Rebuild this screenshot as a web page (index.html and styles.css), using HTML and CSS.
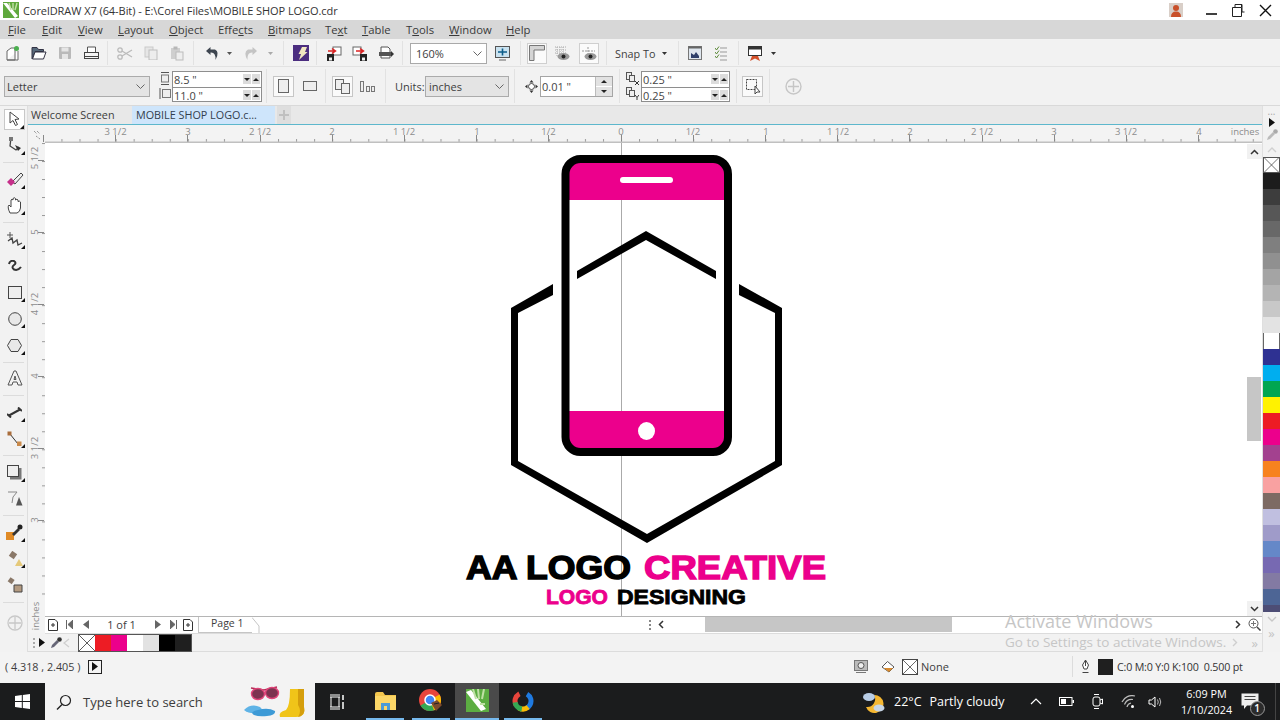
FILE: index.html
```html
<!DOCTYPE html>
<html lang="en">
<head>
<meta charset="utf-8">
<title>CorelDRAW X7</title>
<link rel="stylesheet" href="styles.css">
</head>
<body>
<div class="app">
  <header class="titlebar">
    <svg class="app-logo" width="16" height="16" viewBox="0 0 16 16"><rect width="16" height="16" fill="#5fa83c"/><path d="M0 1 L4 1 L15 14 L12 16 Z" fill="#fff"/><path d="M6 1 L8 8 M10 1 L10 8 M14 1 L12 8" stroke="#c4e0a8" stroke-width="1.4"/></svg>
    <span class="title-text">CorelDRAW X7 (64-Bit) - E:\Corel Files\MOBILE SHOP LOGO.cdr</span>
    <svg class="win-user" width="14" height="14" viewBox="0 0 14 14"><rect width="14" height="14" fill="#d9cfc8"/><circle cx="7" cy="5" r="3" fill="#c9502a"/><path d="M2 14 Q2 8.500 7 8.500 Q12 8.500 12 14Z" fill="#c9502a"/></svg>
    <svg class="win-min" width="11" height="11" viewBox="0 0 11 11"><path d="M0 9 H11" stroke="#111" stroke-width="1.6"/></svg>
    <svg class="win-max" width="13" height="13" viewBox="0 0 13 13"><path d="M3 3 V0.500 H10 V8 H12.500 M0.500 3.500 H9.500 V12.500 H0.500Z M3 0.500 H9.500 V3" fill="none" stroke="#222" stroke-width="1"/></svg>
    <svg class="win-close" width="13" height="13" viewBox="0 0 13 13"><path d="M1 1 L12 12 M12 1 L1 12" stroke="#111" stroke-width="1.4"/></svg>
  </header>

  <nav class="menubar">
    <span class="mi m1"><u>F</u>ile</span>
    <span class="mi m2"><u>E</u>dit</span>
    <span class="mi m3"><u>V</u>iew</span>
    <span class="mi m4"><u>L</u>ayout</span>
    <span class="mi m5"><u>O</u>bject</span>
    <span class="mi m6">Effe<u>c</u>ts</span>
    <span class="mi m7"><u>B</u>itmaps</span>
    <span class="mi m8">Te<u>x</u>t</span>
    <span class="mi m9"><u>T</u>able</span>
    <span class="mi m10">T<u>o</u>ols</span>
    <span class="mi m11"><u>W</u>indow</span>
    <span class="mi m12"><u>H</u>elp</span>
  </nav>

  <div class="toolbar">
    <span class="slot s26"><svg width="16" height="16" viewBox="0 0 16 16"><path d="M2 15 V6 L6 3 H10 V15Z M2 15 H13 V6" fill="#fff" stroke="#666"/><circle cx="11.500" cy="3.500" r="2.500" fill="#4caf50"/></svg></span>
    <span class="slot s26"><svg width="16" height="14" viewBox="0 0 16 14"><path d="M1 13 V1.500 H6 L7.500 3.500 H12.500 V5.500 H4 L1.500 13" fill="#56687a" stroke="#334"/><path d="M1.500 13 L4 6 H15 L12.500 13Z" fill="#fff" stroke="#334"/></svg></span>
    <span class="slot s26"><svg width="14" height="14" viewBox="0 0 14 14"><rect x="1" y="1" width="12" height="12" rx="1" fill="#b9b9b9"/><rect x="3.500" y="1.500" width="7" height="4" fill="#e5e5e5"/><rect x="4" y="8" width="6" height="5" fill="#e5e5e5"/></svg></span>
    <span class="slot s26"><svg width="15" height="14" viewBox="0 0 15 14"><path d="M3.500 6 V1 H11.500 V6" fill="#fff" stroke="#555"/><rect x="0.500" y="6.500" width="14" height="6" fill="#f5f5f5" stroke="#444"/><path d="M0.500 10.500 H14.500" stroke="#444"/></svg></span>
    <i class="sep"></i>
    <span class="slot s26"><svg width="16" height="13" viewBox="0 0 16 13"><circle cx="3" cy="3" r="2.200" fill="none" stroke="#bbb" stroke-width="1.300"/><circle cx="3" cy="10" r="2.200" fill="none" stroke="#bbb" stroke-width="1.300"/><path d="M5 4 L15 10 M5 9 L15 3" stroke="#bbb" stroke-width="1.300"/></svg></span>
    <span class="slot s26"><svg width="14" height="14" viewBox="0 0 14 14"><rect x="1" y="1" width="8" height="10" fill="#e6e6e6" stroke="#c9c9c9"/><rect x="5" y="4" width="8" height="10" fill="#ededed" stroke="#bdbdbd"/></svg></span>
    <span class="slot s26"><svg width="14" height="15" viewBox="0 0 14 15"><rect x="1" y="2" width="9" height="11" fill="#cfcfcf"/><rect x="3.500" y="0.500" width="4" height="3" fill="#b7b7b7"/><rect x="6" y="6" width="7" height="8" fill="#eee" stroke="#bbb"/></svg></span>
    <i class="sep"></i>
    <span class="slot s28"><svg width="15" height="15" viewBox="0 0 15 15"><path d="M5.500 1 L1 5 L5.500 9 V6.500 Q11 6 10.500 14 Q15 6 10 3.500 H5.500Z" fill="#3e4650"/></svg></span>
    <span class="slot s6"><svg width="5" height="3" viewBox="0 0 5 3"><path d="M0 0 H5 L2.500 3Z" fill="#555"/></svg></span>
    <span class="slot s36"><svg width="15" height="15" viewBox="0 0 15 15"><path d="M9.500 1 L14 5 L9.500 9 V6.500 Q4 6 4.500 14 Q0 6 5 3.500 H9.500Z" fill="#c4c4c4"/></svg></span>
    <span class="slot s4"><svg width="5" height="3" viewBox="0 0 5 3"><path d="M0 0 H5 L2.500 3Z" fill="#aaa"/></svg></span>
    <span class="slot s8"></span>
    <i class="sep"></i>
    <span class="slot s25"><svg width="16" height="16" viewBox="0 0 16 16"><rect width="16" height="16" fill="#4b2d7f"/><path d="M9 2 H14 L12 7 H14.500 L6 15 L8 9 H5.500Z" fill="#f0e6c0"/></svg></span>
    <i class="sep"></i>
    <span class="slot s26"><svg width="16" height="15" viewBox="0 0 16 15"><rect x="7" y="1" width="8" height="8" fill="#fff" stroke="#666"/><path d="M2 5 H9 M6 2.500 L9.500 5 L6 7.500" stroke="#d22" stroke-width="1.500" fill="none"/><rect x="1" y="8" width="7" height="7" fill="#222"/><rect x="3" y="11.500" width="3" height="3" fill="#eee"/></svg></span>
    <span class="slot s26"><svg width="16" height="15" viewBox="0 0 16 15"><rect x="1" y="1" width="8" height="8" fill="#fff" stroke="#666"/><path d="M4 5 H11 M8 2.500 L11.500 5 L8 7.500" stroke="#d22" stroke-width="1.500" fill="none"/><rect x="8" y="8" width="7" height="7" fill="#222"/><rect x="10" y="11.500" width="3" height="3" fill="#eee"/></svg></span>
    <span class="slot s26"><svg width="16" height="15" viewBox="0 0 16 15"><path d="M3 1 H10 L12 3 V12 H3Z" fill="#fff" stroke="#555"/><path d="M1 6 H13 V10 H1Z" fill="#555"/><path d="M13 5 L16 8 L13 11Z" fill="#333"/></svg></span>
    <i class="sep"></i>
    <span class="combo zoom-combo">160%<svg class="chev" width="9" height="5" viewBox="0 0 9 5"><path d="M0.500 0.500 L4.500 4.500 L8.500 0.500" fill="none" stroke="#666"/></svg></span>
    <span class="slot s30"><svg width="15" height="15" viewBox="0 0 15 15"><rect x="0.500" y="0.500" width="14" height="11" fill="#c9e2f0" stroke="#555"/><path d="M3 6 H12 M7.500 2.500 V9.500" stroke="#0d5d8a" stroke-width="1.600"/><path d="M4 14 H11" stroke="#666"/></svg></span>
    <i class="sep"></i>
    <span class="slot s24"><span class="btn-box"><svg width="16" height="16" viewBox="0 0 16 16"><path d="M0.500 0.500 H15.500 V5 H5 V15.500 H0.500Z" fill="#d5d5d5" stroke="#777"/></svg></span></span>
    <span class="slot s26"><svg width="16" height="15" viewBox="0 0 16 15"><path d="M1 1 H13 M1 4 H13 M1 7 H13 M3 1 V10 M6 1 V10 M9 1 V8" stroke="#aaa" stroke-dasharray="1 1"/><ellipse cx="9.500" cy="10.500" rx="6" ry="3.500" fill="#999"/><circle cx="9.500" cy="10.500" r="2" fill="#222"/></svg></span>
    <span class="slot s28"><span class="btn-box"><svg width="16" height="15" viewBox="0 0 16 15"><path d="M1 5 H14 M7 1 V9" stroke="#999" stroke-dasharray="2 1"/><ellipse cx="9.500" cy="10.500" rx="6" ry="3.500" fill="#999"/><circle cx="9.500" cy="10.500" r="2" fill="#222"/></svg></span></span>
    <i class="sep"></i>
    <span class="tb-label">Snap To</span>
    <span class="slot s21"><svg width="5" height="3" viewBox="0 0 5 3"><path d="M0 0 H5 L2.500 3Z" fill="#333"/></svg></span>
    <i class="sep"></i>
    <span class="slot s24"><svg width="14" height="14" viewBox="0 0 14 14"><rect x="0.500" y="0.500" width="13" height="13" fill="#dfe6ee" stroke="#777"/><rect x="0.500" y="0.500" width="13" height="2" fill="#666"/><path d="M3 12 V7 L6 9 L8 6 L11 10 V12Z" fill="#2f3f6a"/></svg></span>
    <span class="slot s28"><svg width="12" height="15" viewBox="0 0 12 15"><path d="M5 2 H12 M5 6 H12 M5 10 H12 M5 14 H12" stroke="#999"/><path d="M0 2 L1.500 4 L4 0.500 M0 6 L1.500 8 L4 4.500 M0 10 L1.500 12 L4 8.500" stroke="#5d8a3a" fill="none"/></svg></span>
    <i class="sep"></i>
    <span class="slot s24"><svg width="14" height="15" viewBox="0 0 14 15"><rect x="0.500" y="0.500" width="13" height="9" fill="#fff" stroke="#333"/><rect x="0.500" y="0.500" width="13" height="3" fill="#333"/><path d="M4 10 H10 L12 15 L7 12.500 L2 15Z" fill="#d4502a"/></svg></span>
    <span class="slot s12"><svg width="5" height="3" viewBox="0 0 5 3"><path d="M0 0 H5 L2.500 3Z" fill="#333"/></svg></span>
  </div>

  <div class="propbar">
    <span class="combo paper-combo">Letter<svg class="chev" width="9" height="5" viewBox="0 0 9 5"><path d="M0.500 0.500 L4.500 4.500 L8.500 0.500" fill="none" stroke="#666"/></svg></span>
    <span class="dim-icons">
      <svg width="12" height="13" viewBox="0 0 12 13"><path d="M2 0.500 H10 M2 12.500 H10" stroke="#555"/><rect x="2.500" y="3" width="7" height="7" fill="#eee" stroke="#777"/></svg>
      <svg width="12" height="13" viewBox="0 0 12 13"><path d="M1 1 V12" stroke="#555"/><rect x="3.500" y="2.500" width="8" height="8" fill="#eee" stroke="#777"/></svg>
    </span>
    <span class="spin-stack dims">
      <span class="spin-row"><span class="val">8.5 "</span><b class="sp dn"></b><b class="sp up"></b></span>
      <span class="spin-row"><span class="val">11.0 "</span><b class="sp dn"></b><b class="sp up"></b></span>
    </span>
    <i class="sep pb-s1"></i>
    <span class="pb-box pb-portrait"><svg width="11" height="14" viewBox="0 0 11 14"><rect x="0.500" y="0.500" width="10" height="13" fill="#eee" stroke="#666"/></svg></span>
    <span class="pb-ic pb-landscape"><svg width="14" height="10" viewBox="0 0 14 10"><rect x="0.500" y="0.500" width="13" height="9" fill="#eee" stroke="#666"/></svg></span>
    <i class="sep pb-s2"></i>
    <span class="pb-box pb-pages"><svg width="15" height="15" viewBox="0 0 15 15"><rect x="0.500" y="0.500" width="8" height="10" fill="#eee" stroke="#666"/><rect x="6.500" y="4.500" width="8" height="10" fill="#eee" stroke="#666"/></svg></span>
    <span class="pb-ic pb-pagecur"><svg width="15" height="11" viewBox="0 0 15 11"><rect x="0.500" y="0.500" width="3" height="10" fill="#eee" stroke="#777"/><rect x="6.500" y="5.500" width="3" height="5" fill="#eee" stroke="#777"/><rect x="11.500" y="5.500" width="3" height="5" fill="#eee" stroke="#777"/></svg></span>
    <i class="sep pb-s3"></i>
    <span class="units-label">Units:</span>
    <span class="combo units-combo">inches<svg class="chev" width="9" height="5" viewBox="0 0 9 5"><path d="M0.500 0.500 L4.500 4.500 L8.500 0.500" fill="none" stroke="#666"/></svg></span>
    <i class="sep pb-s4"></i>
    <span class="pb-ic pb-nudge"><svg width="13" height="13" viewBox="0 0 13 13"><circle cx="6.500" cy="6.500" r="3" fill="#fff" stroke="#444"/><path d="M6.500 0 L8.500 2.500 H4.500Z M6.500 13 L8.500 10.500 H4.500Z M0 6.500 L2.500 4.500 V8.500Z M13 6.500 L10.500 4.500 V8.500Z" fill="#333"/></svg></span>
    <span class="nudge-input"><span class="val">0.01 "</span><span class="nudge-spin"><b class="sp-big up"></b><b class="sp-big dn"></b></span></span>
    <i class="sep pb-s5"></i>
    <span class="dim-icons dup-icons">
      <svg width="13" height="13" viewBox="0 0 13 13"><rect x="0.500" y="0.500" width="5" height="7" fill="#eee" stroke="#555"/><rect x="3.500" y="3.500" width="5" height="6" fill="#eee" stroke="#555"/><path d="M9 9 L13 13 M13 9 L9 13" stroke="#333"/></svg>
      <svg width="13" height="13" viewBox="0 0 13 13"><rect x="0.500" y="0.500" width="5" height="7" fill="#eee" stroke="#555"/><rect x="3.500" y="3.500" width="5" height="6" fill="#eee" stroke="#555"/><path d="M9 8 L11 10.500 L13 8 M11 10.500 V13" stroke="#333" fill="none"/></svg>
    </span>
    <span class="spin-stack dups">
      <span class="spin-row"><span class="val">0.25 "</span><b class="sp dn"></b><b class="sp up"></b></span>
      <span class="spin-row"><span class="val">0.25 "</span><b class="sp dn"></b><b class="sp up"></b></span>
    </span>
    <i class="sep pb-s6"></i>
    <span class="pb-box pb-treat"><svg width="16" height="17" viewBox="0 0 16 17"><rect x="1.500" y="1.500" width="10" height="10" fill="none" stroke="#444" stroke-dasharray="2 1"/><path d="M10 8 V16 L12 14 L15 14Z" fill="#fff" stroke="#444"/></svg></span>
    <i class="sep pb-s7"></i>
    <span class="pb-ic pb-plus"><svg width="17" height="17" viewBox="0 0 17 17"><circle cx="8.500" cy="8.500" r="7.500" fill="none" stroke="#c6c6c6" stroke-width="1.400"/><path d="M8.500 3 V14 M3 8.500 H14" stroke="#c6c6c6" stroke-width="1.400"/></svg></span>
  </div>

  <div class="workspace">
    <aside class="toolbox">
      <span class="tool"><span class="tool-active"><svg width="14" height="16" viewBox="0 0 14 16"><path d="M2 1 L2 12 L5 9.500 L7.500 14.500 L9.500 13.500 L7 8.500 L11 8Z" fill="#fff" stroke="#444"/></svg><b class="corner corner-in"></b></span></span>
      <span class="tool"><svg width="16" height="17" viewBox="0 0 16 17"><path d="M4 1 L3 9 L9 13 L12 10" fill="none" stroke="#444" stroke-width="1.300"/><rect x="2" y="0" width="4" height="4" fill="#777"/><path d="M8 8 L11 14 L14 11Z" fill="#333"/></svg><b class="corner"></b></span>
      <i class="tool-sep"></i>
      <span class="tool"><svg width="18" height="16" viewBox="0 0 18 16"><path d="M6 11 L15 2 L17 4 L9 13Z" fill="#eee" stroke="#444"/><path d="M1 11 L5 7 L9 11 L5 15Z" fill="#c62f8a"/></svg><b class="corner"></b></span>
      <span class="tool"><svg width="15" height="17" viewBox="0 0 15 17"><path d="M3 16 Q0 10 2 8 L4 10 V3 Q5 1.500 6 3 V1.500 Q7.500 0 8.500 1.500 V3 Q10 1.500 11 3 V4.500 Q12.500 3.500 13.500 5 V11 Q13 15 10 16Z" fill="#fff" stroke="#444"/></svg><b class="corner"></b></span>
      <i class="tool-sep"></i>
      <span class="tool"><svg width="17" height="15" viewBox="0 0 17 15"><path d="M1 3 H7 M4 0 V6" stroke="#555"/><path d="M2 9 L6 6 L7 11 L11 8 L12 13 L16 11" fill="none" stroke="#444" stroke-width="1.300"/></svg><b class="corner"></b></span>
      <span class="tool"><svg width="14" height="11" viewBox="0 0 14 11"><path d="M1 4 Q2 0 6 1 Q9 3 6 5 Q3 7 6 9.500 Q10 11 13 7" fill="none" stroke="#333" stroke-width="2"/></svg></span>
      <span class="tool"><svg width="14" height="13" viewBox="0 0 14 13"><rect x="0.500" y="0.500" width="13" height="12" fill="#eee" stroke="#444"/></svg><b class="corner"></b></span>
      <span class="tool"><svg width="14" height="14" viewBox="0 0 14 14"><circle cx="7" cy="7" r="6.300" fill="#e8e8e8" stroke="#444"/></svg><b class="corner"></b></span>
      <span class="tool"><svg width="15" height="13" viewBox="0 0 15 13"><path d="M4 0.500 H11 L14.500 6.500 L11 12.500 H4 L0.500 6.500Z" fill="#e8e8e8" stroke="#444"/></svg><b class="corner"></b></span>
      <i class="tool-sep"></i>
      <span class="tool"><svg width="16" height="17" viewBox="0 0 16 17"><path d="M1 15 L7 1 H9 L15 15 H11 L10 12 H6 L5 15Z M7 9.500 H9 L8 6Z" fill="#f2f2f2" stroke="#555"/></svg></span>
      <i class="tool-sep"></i>
      <span class="tool"><svg width="15" height="11" viewBox="0 0 15 11"><path d="M2 8.500 L13 2.500" stroke="#333" stroke-width="2"/><path d="M0 7 L4 10.500 M11 0.500 L15 4" stroke="#333" stroke-width="2"/></svg><b class="corner"></b></span>
      <span class="tool"><svg width="15" height="16" viewBox="0 0 15 16"><path d="M3 3 L11 13" stroke="#333"/><rect x="0.500" y="0.500" width="4" height="4" fill="#a96d3b"/><rect x="10" y="10.500" width="4.500" height="4.500" fill="#c98a4b"/></svg><b class="corner"></b></span>
      <i class="tool-sep"></i>
      <span class="tool"><svg width="15" height="15" viewBox="0 0 15 15"><rect x="3" y="3" width="11.500" height="11.500" fill="#777"/><rect x="0.500" y="0.500" width="11" height="11" fill="#eee" stroke="#444"/></svg><b class="corner"></b></span>
      <span class="tool"><svg width="16" height="15" viewBox="0 0 16 15"><path d="M1 1 H10 L6 6 L5 12" fill="none" stroke="#888"/><path d="M9 14.500 L12 6 L15.500 14.500Z" fill="#555"/></svg></span>
      <i class="tool-sep"></i>
      <span class="tool"><svg width="17" height="17" viewBox="0 0 17 17"><rect x="0" y="8" width="8" height="8" fill="#e08a25"/><path d="M6 10 L12 4 L14 6 L8 12Z" fill="#333"/><circle cx="14" cy="3" r="2.500" fill="#222"/></svg><b class="corner"></b></span>
      <span class="tool"><svg width="16" height="16" viewBox="0 0 16 16"><rect x="3" y="1" width="6" height="6" fill="#8a7868" transform="rotate(35 6 4)"/><path d="M8 15 L12 8 L16 15Z" fill="#e5c97a"/></svg><b class="corner"></b></span>
      <span class="tool"><svg width="16" height="16" viewBox="0 0 16 16"><rect x="2" y="1" width="5" height="5" fill="#8a7868" transform="rotate(35 4 3)"/><path d="M7 8 H15 V15 H7Z" fill="#b39a80" stroke="#444"/></svg></span>
      <i class="tool-sep"></i>
      <span class="tool tool-plus"><svg width="16" height="16" viewBox="0 0 16 16"><circle cx="8" cy="8" r="7" fill="none" stroke="#c8c8c8" stroke-width="1.300"/><path d="M8 2 V14 M2 8 H14" stroke="#c8c8c8" stroke-width="1.300"/></svg></span>
    </aside>

    <div class="center">
      <div class="tabs">
        <span class="tab">Welcome Screen</span>
        <span class="tab tab-current">MOBILE SHOP LOGO.c...</span>
        <span class="tab-add"><svg width="10" height="10" viewBox="0 0 10 10"><path d="M5 0 V10 M0 5 H10" stroke="#c0c0c0" stroke-width="2"/></svg></span>
      </div>
      <svg class="hruler" width="1234" height="18" viewBox="28 125 1234 18">
        <defs><pattern id="hminor" x="621" y="0" width="18.050" height="143" patternUnits="userSpaceOnUse"><path d="M0.500 139 V143" stroke="#999"/></pattern></defs>
        <rect x="45" y="125" width="1217" height="18" fill="url(#hminor)"/>
        <path d="M43.500 135 V142 M115.500 135 V142 M187.500 135 V142 M260.500 135 V142 M332.500 135 V142 M404.500 135 V142 M476.500 135 V142 M548.500 135 V142 M621.500 135 V142 M693.500 135 V142 M765.500 135 V142 M837.500 135 V142 M909.500 135 V142 M982.500 135 V142 M1054.500 135 V142 M1126.500 135 V142 M1198.500 135 V142" stroke="#888"/>
        <path d="M34 131 L37 134 M37 131 L40 134 M36 136 L40 139" stroke="#777" stroke-dasharray="1 1"/>
        <rect x="45" y="141.500" width="1217" height="1.500" fill="#c0c0c0"/>
        <g class="rl">
          <text x="115.500" y="135">3 1/2</text><text x="188" y="135">3</text><text x="260" y="135">2 1/2</text><text x="332" y="135">2</text><text x="404" y="135">1 1/2</text><text x="477" y="135">1</text><text x="548.500" y="135">1/2</text><text x="621" y="135">0</text><text x="693" y="135">1/2</text><text x="766" y="135">1</text><text x="838" y="135">1 1/2</text><text x="910" y="135">2</text><text x="982" y="135">2 1/2</text><text x="1054" y="135">3</text><text x="1126" y="135">3 1/2</text><text x="1199" y="135">4</text><text x="1245" y="135">inches</text>
        </g>
      </svg>
      <div class="mid">
        <svg class="vruler" width="17" height="490" viewBox="28 143 17 490">
          <defs><pattern id="vminor" x="0" y="161" width="45" height="18.020" patternUnits="userSpaceOnUse"><path d="M42 0.500 H45" stroke="#999"/></pattern></defs>
          <rect x="28" y="143" width="17" height="462" fill="url(#vminor)"/>
          <path d="M38 160.500 H44 M38 232.500 H44 M38 304.500 H44 M38 376.500 H44 M38 448.500 H44 M38 520.500 H44" stroke="#888"/>
          <g class="rl">
            <text transform="translate(38 158) rotate(-90)">5 1/2</text>
            <text transform="translate(38 232) rotate(-90)">5</text>
            <text transform="translate(38 304) rotate(-90)">4 1/2</text>
            <text transform="translate(38 376) rotate(-90)">4</text>
            <text transform="translate(38 448) rotate(-90)">3 1/2</text>
            <text transform="translate(38 520) rotate(-90)">3</text>
            <text transform="translate(39 616) rotate(-90)">inches</text>
          </g>
        </svg>
        <div class="canvas-col">
          <div class="canvas-row">
            <svg class="canvas" width="1202" height="473" viewBox="45 143 1202 473">
              <rect x="45" y="143" width="1202" height="473" fill="#fff"/>
              <path d="M621.500 143 V616" stroke="#aaaaaa"/>
              <path d="M553 284 L511 308 V465 L647 543 L782 465 V308 L739 284 V295 L775 313 V461 L647 534 L518 461 V313 L553 295Z" fill="#000"/>
              <path d="M569 200 V172 Q569 162 579 162 H714 Q724 162 724 172 V200Z" fill="#ec008c"/>
              <path d="M569 411 H724 V439 Q724 449 714 449 H579 Q569 449 569 439Z" fill="#ec008c"/>
              <rect x="565.500" y="159" width="162.500" height="293" rx="15" fill="none" stroke="#000" stroke-width="8"/>
              <rect x="620" y="177" width="53" height="6" rx="3" fill="#fff"/>
              <ellipse cx="646.500" cy="431" rx="8.500" ry="9" fill="#fff"/>
              <path d="M577 271 L646 231 L716 271 V279 L646 240 L577 279Z" fill="#000"/>
              <text class="lg lg-big" x="466" y="579" textLength="165" lengthAdjust="spacingAndGlyphs">AA LOGO</text>
              <text class="lg lg-big lg-pink" x="644" y="579" textLength="182" lengthAdjust="spacingAndGlyphs">CREATIVE</text>
              <text class="lg lg-small lg-pink" x="546" y="604" textLength="62" lengthAdjust="spacingAndGlyphs">LOGO</text>
              <text class="lg lg-small" x="617" y="604" textLength="129" lengthAdjust="spacingAndGlyphs">DESIGNING</text>
            </svg>
            <div class="vscroll">
              <span class="sb-btn"><svg width="9" height="6" viewBox="0 0 9 6"><path d="M1 5 L4.500 1.500 L8 5" fill="none" stroke="#333" stroke-width="1.500"/></svg></span>
              <span class="vthumb"></span>
              <span class="sb-btn"><svg width="9" height="6" viewBox="0 0 9 6"><path d="M1 1 L4.500 4.500 L8 1" fill="none" stroke="#333" stroke-width="1.500"/></svg></span>
            </div>
          </div>
          <div class="navrow">
            <svg class="nav-ic nav-add1" width="10" height="12" viewBox="0 0 10 12"><path d="M0.500 0.500 H7 L9.500 3 V11.500 H0.500Z M3 6 H7 M5 4 V8" fill="#fff" stroke="#333"/></svg>
            <svg class="nav-ic nav-first" width="7" height="9" viewBox="0 0 7 9"><path d="M0.500 0 V9 M7 0 V9 L2 4.500Z" stroke="#666" fill="#666"/></svg>
            <svg class="nav-ic nav-prev" width="6" height="9" viewBox="0 0 6 9"><path d="M6 0 V9 L0 4.500Z" fill="#666"/></svg>
            <span class="page-of">1 of 1</span>
            <svg class="nav-ic nav-next" width="6" height="9" viewBox="0 0 6 9"><path d="M0 0 V9 L6 4.500Z" fill="#666"/></svg>
            <svg class="nav-ic nav-last" width="7" height="9" viewBox="0 0 7 9"><path d="M6.500 0 V9 M0 0 V9 L5 4.500Z" stroke="#666" fill="#666"/></svg>
            <svg class="nav-ic nav-add2" width="10" height="12" viewBox="0 0 10 12"><path d="M0.500 0.500 H7 L9.500 3 V11.500 H0.500Z M3 6 H7 M5 4 V8" fill="#fff" stroke="#333"/></svg>
            <span class="page-tab">Page 1</span>
            <svg class="page-fold" width="8" height="16" viewBox="0 0 8 16"><path d="M0 0.500 L7 9 V16" fill="none" stroke="#c5c5c5"/></svg>
            <span class="hdots"></span>
            <span class="hscroll">
              <svg class="h-left" width="6" height="9" viewBox="0 0 6 9"><path d="M5 1 L1.500 4.500 L5 8" fill="none" stroke="#333" stroke-width="1.500"/></svg>
              <span class="hthumb"></span>
              <svg class="h-right" width="6" height="9" viewBox="0 0 6 9"><path d="M1 1 L4.500 4.500 L1 8" fill="none" stroke="#333" stroke-width="1.500"/></svg>
              <svg class="h-zoom" width="13" height="13" viewBox="0 0 13 13"><circle cx="5.500" cy="5.500" r="4.500" fill="#fff" stroke="#555"/><path d="M9 9 L12.500 12.500" stroke="#444" stroke-width="1.500"/><path d="M3 5.500 H8 M5.500 3 V8" stroke="#777"/></svg>
            </span>
          </div>
        </div>
      </div>
      <div class="palrow">
        <span class="dots"></span>
        <svg class="pal-play" width="6" height="9" viewBox="0 0 6 9"><path d="M0 0 V9 L6 4.500Z" fill="#111"/></svg>
        <svg class="pal-drop" width="12" height="12" viewBox="0 0 12 12"><path d="M1 11 L2 8 L7 3 L9 5 L4 10Z" fill="#667"/><circle cx="9.500" cy="2.500" r="2.300" fill="#333"/></svg>
        <svg class="pal-back" width="7" height="10" viewBox="0 0 7 10"><path d="M6 1 L1 5 L6 9" fill="none" stroke="#d0d0d0" stroke-width="1.400"/></svg>
        <span class="swatches">
          <span class="sw sw-none"><svg width="16" height="16" viewBox="0 0 16 16"><path d="M0 0 L16 16 M16 0 L0 16" stroke="#333" stroke-width="0.800"/></svg></span>
          <span class="sw c-red"></span><span class="sw c-mag"></span><span class="sw c-wht"></span><span class="sw c-lgr"></span><span class="sw c-blk"></span><span class="sw c-nbk"></span>
        </span>
        <svg class="pal-next" width="6" height="9" viewBox="0 0 6 9"><path d="M1 1 L4.500 4.500 L1 8" fill="none" stroke="#cfcfcf" stroke-width="1.400"/></svg>
        <span class="pal-more">»</span>
      </div>
    </div>

    <aside class="dock">
      <span class="dock-dots">...</span>
      <svg class="dock-play" width="6" height="9" viewBox="0 0 6 9"><path d="M0 0 V9 L6 4.500Z" fill="#111"/></svg>
      <svg class="dock-drop" width="12" height="12" viewBox="0 0 12 12"><path d="M1 11 L2 8 L7 3 L9 5 L4 10Z" fill="#bbb"/><circle cx="9.500" cy="2.500" r="2.300" fill="#aaa"/></svg>
      <svg class="dock-up" width="10" height="6" viewBox="0 0 10 6"><path d="M1 5 L5 1 L9 5" fill="none" stroke="#d0d0d0" stroke-width="1.400"/></svg>
      <div class="strip">
        <span class="ps ps-none"><svg width="16" height="16" viewBox="0 0 16 16"><path d="M0 0 L16 16 M16 0 L0 16" stroke="#333" stroke-width="0.800"/></svg></span>
        <span class="ps p1"></span><span class="ps p2"></span><span class="ps p3"></span><span class="ps p4"></span><span class="ps p5"></span><span class="ps p6"></span><span class="ps p7"></span><span class="ps p8"></span><span class="ps p9"></span><span class="ps p10"></span><span class="ps p11"></span><span class="ps p12"></span><span class="ps p13"></span><span class="ps p14"></span><span class="ps p15"></span><span class="ps p16"></span><span class="ps p17"></span><span class="ps p18"></span><span class="ps p19"></span><span class="ps p20"></span><span class="ps p21"></span><span class="ps p22"></span><span class="ps p23"></span><span class="ps p24"></span><span class="ps p25"></span><span class="ps p26"></span><span class="ps p27"></span><span class="ps p28"></span>
      </div>
      <svg class="dock-down" width="10" height="6" viewBox="0 0 10 6"><path d="M1 1 L5 5 L9 1" fill="none" stroke="#c8c8c8" stroke-width="1.400"/></svg>
      <span class="dock-more">»</span>
    </aside>
  </div>

  <div class="status">
    <span class="coords">( 4.318 , 2.405 )</span>
    <span class="coord-btn"><svg width="6" height="9" viewBox="0 0 6 9"><path d="M0 0 V9 L6 4.500Z" fill="#111"/></svg></span>
    <svg class="st-doc" width="14" height="13" viewBox="0 0 14 13"><rect x="0.500" y="0.500" width="13" height="10" fill="#bbb" stroke="#777"/><circle cx="7" cy="5.500" r="3" fill="#eee" stroke="#555"/><path d="M2 12.500 H12" stroke="#777"/></svg>
    <svg class="st-fill" width="15" height="14" viewBox="0 0 15 14"><path d="M1 7 L6.500 1.500 L13 7 L8 12Z" fill="#fff" stroke="#555"/><path d="M2.500 8 H12 L8 12Z" fill="#d88a2e"/></svg>
    <span class="st-none"><svg width="16" height="16" viewBox="0 0 16 16"><rect x="0.500" y="0.500" width="15" height="15" fill="#fff" stroke="#444"/><path d="M0 0 L16 16 M16 0 L0 16" stroke="#444" stroke-width="0.800"/></svg></span>
    <span class="st-none-label">None</span>
    <i class="st-sep"></i>
    <svg class="st-pen" width="9" height="15" viewBox="0 0 9 15"><path d="M4.500 1 L7.500 6 L6 10 H3 L1.500 6Z" fill="#fff" stroke="#444"/><path d="M4.500 1 V7 M1.500 13.500 H7.500" stroke="#444"/></svg>
    <span class="st-black"></span>
    <span class="st-outline">C:0 M:0 Y:0 K:100&nbsp; 0.500 pt</span>
  </div>

  <footer class="taskbar">
    <svg class="start" width="15" height="15" viewBox="0 0 15 15"><path d="M0 2 L6.800 1 V7 H0Z M7.800 0.900 L15 0 V7 H7.800Z M0 8 H6.800 V14 L0 13Z M7.800 8 H15 V15 L7.800 14.100Z" fill="#fff"/></svg>
    <div class="search">
      <svg class="search-ic" width="16" height="16" viewBox="0 0 16 16"><circle cx="9.500" cy="6.500" r="5" fill="none" stroke="#222" stroke-width="1.200"/><path d="M6 10.500 L1 15.500" stroke="#222" stroke-width="1.400"/></svg>
      <span class="search-text">Type here to search</span>
      <svg class="search-art" width="62" height="36" viewBox="0 0 62 36">
        <path d="M7 4 L20 6 L33 3" stroke="#b52c55" stroke-width="1.500" fill="none"/>
        <ellipse cx="14" cy="10" rx="6.500" ry="5.500" fill="#7d3350" stroke="#e0457a" stroke-width="1.400"/>
        <ellipse cx="28" cy="9" rx="6.500" ry="5.500" fill="#7d3350" stroke="#e0457a" stroke-width="1.400"/>
        <path d="M0 26 Q7 19 16 23 Q21 27 13 29 Q5 30 0 26Z" fill="#5fb3e6"/>
        <path d="M10 31 Q5 28 14 26 Q24 23 31 27 Q32 31 23 32 Q15 33 10 31Z" fill="#3d9ad6"/>
        <path d="M46 5 H60 V23 Q62 33 52 33 H36 Q34 28 42 26 Q46 22 46 5Z" fill="#f0c419"/>
        <path d="M54 5 H60 V23 Q62 31 54 33 Q58 27 54 21Z" fill="#d59e0c"/>
      </svg>
    </div>
    <svg class="tb-task" width="16" height="16" viewBox="0 0 16 16"><path d="M1 3 H11 M1 13 H11 M2 3 V13 M10 3 V13 M1 1 H11 M1 15 H11" stroke="#fff" stroke-width="1"/><path d="M14 1 V6 M14 8 V15" stroke="#fff" stroke-width="1.500"/></svg>
    <span class="tb-app tb-explorer"><svg width="21" height="18" viewBox="0 0 21 18"><path d="M0 2 Q0 0 2 0 H8 L10 3 H21 V18 H0Z" fill="#f3c64e"/><rect y="4" width="21" height="14" fill="#fbd667"/><path d="M6 18 V11 H15 V18 H12 V14 H9 V18Z" fill="#4a9bd6"/></svg></span>
    <span class="tb-app tb-chrome"><svg width="24" height="24" viewBox="0 0 24 24"><circle cx="11" cy="11" r="11" fill="#e8453c"/><path d="M11 11 L1.500 16.500 A11 11 0 0 0 11 22 Q17 22 20.500 16.500Z" fill="#34a853"/><path d="M11 11 L20.500 5.500 A11 11 0 0 1 15 21.300Z" fill="#fbbc05"/><circle cx="11" cy="11" r="5" fill="#4285f4" stroke="#fff" stroke-width="1.500"/><path d="M12 14 L18 11 L23 16 L17 22Z" fill="#7c4a2d"/><path d="M15 15 L20 14" stroke="#222"/></svg></span>
    <span class="tb-app tb-corel"><svg width="23" height="23" viewBox="0 0 23 23"><rect width="23" height="23" fill="#5cad42"/><path d="M0 3 L5 1 L20 20 L15 22 Z" fill="#fff"/><path d="M7 0 L10 10 M12 0 L13 10 M18 0 L16 10" stroke="#bfe0a5" stroke-width="2"/><path d="M14 15 H19" stroke="#bfe0a5" stroke-width="2"/></svg></span>
    <span class="tb-app tb-record"><svg width="22" height="22" viewBox="0 0 22 22"><circle cx="11" cy="11" r="8" fill="none" stroke="#e8453c" stroke-width="5" stroke-dasharray="13 40" transform="rotate(150 11 11)"/><circle cx="11" cy="11" r="8" fill="none" stroke="#1f7ae0" stroke-width="5" stroke-dasharray="17 40" transform="rotate(-60 11 11)"/><circle cx="11" cy="11" r="8" fill="none" stroke="#fbbc05" stroke-width="5" stroke-dasharray="10 40" transform="rotate(50 11 11)"/><circle cx="11" cy="11" r="8" fill="none" stroke="#34a853" stroke-width="5" stroke-dasharray="9 40" transform="rotate(105 11 11)"/></svg></span>
    <svg class="weather" width="23" height="22" viewBox="0 0 23 22"><path d="M12 4 A9 9 0 1 1 4 16 A8 8 0 0 0 12 4Z" fill="#f5b731"/><ellipse cx="7" cy="6" rx="6" ry="4" fill="#b8cde6"/><ellipse cx="17" cy="17" rx="5.500" ry="3.500" fill="#c8d6e6"/></svg>
    <span class="temp">22°C</span>
    <span class="cond">Partly cloudy</span>
    <svg class="tray-chev" width="12" height="7" viewBox="0 0 12 7"><path d="M1 6 L6 1 L11 6" fill="none" stroke="#fff" stroke-width="1.200"/></svg>
    <svg class="tray-batt" width="15" height="9" viewBox="0 0 15 9"><rect x="0.500" y="0.500" width="12.500" height="8" fill="none" stroke="#fff"/><rect x="2" y="2" width="5" height="5" fill="#fff"/><rect x="13.500" y="3" width="1.500" height="3" fill="#fff"/></svg>
    <svg class="tray-meet" width="11" height="17" viewBox="0 0 11 17"><rect x="1" y="4" width="7" height="9" rx="2" fill="none" stroke="#fff"/><path d="M8 7 L10.500 6 V11 L8 10 M2 1.500 H7 M2 15.500 H7" stroke="#fff" fill="none"/></svg>
    <svg class="tray-wifi" width="15" height="14" viewBox="0 0 15 14"><path d="M1 7 A11 11 0 0 1 14 1 M3.500 9.500 A8 8 0 0 1 12 4.500 M6 12 A5 5 0 0 1 10 8" fill="none" stroke="#bbb" stroke-width="1.200"/><circle cx="11.500" cy="11.500" r="1.500" fill="#fff"/></svg>
    <svg class="tray-vol" width="16" height="14" viewBox="0 0 16 14"><path d="M1 5 H3.500 L7 2 V12 L3.500 9 H1Z" fill="none" stroke="#fff"/><path d="M9.500 4.500 Q11 7 9.500 9.500 M11.500 3 Q14 7 11.500 11" fill="none" stroke="#bbb"/></svg>
    <span class="clock"><span>6:09 PM</span><span>1/10/2024</span></span>
    <span class="notif"><svg width="20" height="17" viewBox="0 0 20 17"><path d="M0.500 0.500 H17.500 V12.500 H6 L3 16 V12.500 H0.500Z" fill="#eee"/><path d="M3.500 3.500 H14.500 M3.500 6.500 H14.500" stroke="#444"/></svg><b class="badge">1</b></span>
    <i class="show-desktop"></i>
  </footer>

  <div class="watermark">
    <span class="wm-1">Activate Windows</span>
    <span class="wm-2">Go to Settings to activate Windows.</span>
  </div>
</div>
</body>
</html>
```
FILE: styles.css
```css
* { box-sizing: border-box; }
html, body { margin: 0; padding: 0; }
body { width: 1280px; height: 720px; overflow: hidden; font-family: "Open Sans", "Noto Sans", sans-serif; color: #3d3d3d; font-size: 11.500px; background: #f2f2f2; }
.app { position: relative; width: 1280px; height: 720px; display: flex; flex-direction: column; }
svg { display: block; flex: none; }

.titlebar { height: 20px; background: #fff; display: flex; align-items: center; padding-left: 3px; }
.title-text { margin-left: 4px; font-size: 11px; letter-spacing: -0.060px; color: #333; white-space: nowrap; }
.win-user { margin-left: auto; }
.win-min { margin-left: 23px; }
.win-max { margin-left: 15px; }
.win-close { margin: 0 8px 0 14px; }

.menubar { height: 19px; background: #d7d7d7; display: flex; align-items: center; padding-left: 8px; font-size: 11.300px; color: #3a3a3a; }
.mi { white-space: nowrap; }
.mi u { text-underline-offset: 1px; }
.m1 { width: 34px; } .m2 { width: 36px; } .m3 { width: 40px; } .m4 { width: 51px; } .m5 { width: 49px; } .m6 { width: 50px; } .m7 { width: 57px; } .m8 { width: 37px; } .m9 { width: 44px; } .m10 { width: 43px; } .m11 { width: 57px; }

.toolbar { height: 28px; padding-top: 1px; background: #f2f2f2; border-bottom: 1px solid #e2e2e2; display: flex; align-items: center; }
.slot { height: 26px; display: flex; align-items: center; justify-content: center; flex: none; }
.s4 { width: 4px; } .s6 { width: 6px; } .s8 { width: 8px; } .s12 { width: 12px; } .s21 { width: 21px; } .s24 { width: 24px; } .s25 { width: 25px; } .s26 { width: 26px; } .s28 { width: 28px; } .s30 { width: 30px; } .s36 { width: 36px; }
.sep { display: block; width: 1px; height: 24px; margin: 0 4px 0 3px; background: #e2e2e2; flex: none; }
.btn-box { width: 20px; height: 21px; background: #fbfbfb; border: 1px solid #cfcfcf; display: flex; align-items: center; justify-content: center; }
.tb-label { width: 43px; padding-left: 4px; font-size: 10.800px; white-space: nowrap; flex: none; }
.combo { display: flex; align-items: center; justify-content: space-between; flex: none; white-space: nowrap; font-size: 11px; }
.zoom-combo { width: 77px; height: 21px; margin-left: 3px; background: #fff; border: 1px solid #a9a9a9; padding: 0 4px 0 5px; }

.propbar { height: 39px; background: #f2f2f2; border-bottom: 1px solid #d9d9d9; display: flex; align-items: center; padding-left: 4px; }
.paper-combo { width: 146px; height: 21px; background: #e4e4e4; border: 1px solid #ababab; padding: 0 4px 0 2px; }
.dim-icons { width: 12px; margin-left: 9px; height: 30px; display: flex; flex-direction: column; justify-content: space-around; flex: none; }
.spin-stack { height: 31px; background: #fff; border: 1px solid #8e8e8e; display: flex; flex-direction: column; flex: none; }
.dims { width: 90px; margin-left: 1px; }
.spin-row { flex: 1; display: flex; align-items: center; gap: 1px; padding-right: 1px; }
.spin-row + .spin-row { border-top: 1px solid #8e8e8e; }
.val { flex: 1; padding-left: 1px; font-size: 11px; white-space: nowrap; color: #444; }
.sp { width: 8px; height: 10px; background: #dcdcdc; position: relative; flex: none; display: flex; align-items: center; justify-content: center; }
.sp::before, .sp-big::before { content: ""; border-left: 3px solid transparent; border-right: 3px solid transparent; }
.sp.dn::before, .sp-big.dn::before { border-top: 3px solid #222; }
.sp.up::before, .sp-big.up::before { border-bottom: 3px solid #222; }
.pb-s1 { margin-left: 4px; margin-right: 6px; height: 34px; }
.pb-box { width: 21px; height: 21px; background: #fafafa; border: 1px solid #c6c6c6; display: flex; align-items: center; justify-content: center; flex: none; }
.pb-ic { display: flex; justify-content: center; flex: none; }
.pb-landscape { width: 14px; margin-left: 9px; }
.pb-s2 { margin-left: 8px; margin-right: 6px; height: 34px; }
.pb-pagecur { width: 15px; margin-left: 7px; }
.pb-s3 { margin-left: 10px; margin-right: 9px; height: 34px; }
.units-label { width: 30px; white-space: nowrap; font-size: 11px; flex: none; }
.units-combo { width: 84px; height: 21px; background: #e4e4e4; border: 1px solid #ababab; padding: 0 4px 0 3px; }
.pb-s4 { margin-left: 5px; margin-right: 9px; height: 34px; }
.pb-nudge { width: 13px; margin-left: 1px; }
.nudge-input { width: 73px; height: 21px; margin-left: 2px; background: #fff; border: 1px solid #a5a5a5; display: flex; align-items: center; flex: none; }
.nudge-spin { width: 17px; height: 19px; display: flex; flex-direction: column; gap: 1px; border-left: 1px solid #bbb; }
.sp-big { flex: 1; background: #e2e2e2; display: flex; align-items: center; justify-content: center; }
.pb-s5 { margin-left: 6px; margin-right: 4px; height: 34px; }
.dup-icons { width: 13px; margin-left: 2px; flex: none; }
.dups { width: 89px; margin-left: 2px; }
.pb-s6 { margin-left: 6px; margin-right: 5px; height: 34px; }
.pb-s7 { margin-left: 6px; margin-right: 15px; height: 34px; }

.workspace { height: 546px; display: flex; }
.toolbox { width: 28px; border-right: 1px solid #dedede; background: #f2f2f2; display: flex; flex-direction: column; flex: none; }
.tool { height: 26.500px; display: flex; align-items: center; justify-content: center; position: relative; padding-left: 2px; flex: none; }
.tool-active { width: 21px; height: 21px; background: #fff; border: 1px solid #c8c8c8; display: flex; align-items: center; justify-content: center; position: relative; }
.corner { position: absolute; right: 2px; bottom: 4px; width: 0; height: 0; border-left: 4px solid transparent; border-bottom: 4px solid #111; }
.corner-in { right: 0; bottom: 0; }
.tool-sep { display: block; height: 1px; margin: 3px 3px; background: #dcdcdc; flex: none; }
.tool-plus { margin-top: 4px; }

.center { width: 1234px; display: flex; flex-direction: column; flex: none; }
.tabs { height: 19px; background: #e8e8e8; border-bottom: 1px solid #5db7cc; display: flex; align-items: stretch; }
.tab { padding-left: 3px; width: 104px; line-height: 18px; font-size: 10.800px; color: #3c3c3c; white-space: nowrap; }
.tab-current { width: 143px; padding-left: 4px; background: #cee5fb; margin-right: 2px; color: #33404e; }
.tab-add { width: 14px; background: #dedede; display: flex; align-items: center; justify-content: center; }
.hruler { background: #f3f3f3; }
.rl text { font-family: "Open Sans", sans-serif; font-size: 9.500px; fill: #8c8c8c; text-anchor: middle; }
.mid { flex: 1; display: flex; min-height: 0; }
.vruler { background: #f3f3f3; }
.canvas-col { width: 1217px; display: flex; flex-direction: column; flex: none; border-bottom: 1px solid #dcdcdc; }
.canvas-row { height: 473px; display: flex; flex: none; }
.canvas { background: #fff; box-shadow: inset 1px 0 0 #aaa; }
.lg { font-family: "Liberation Sans", Arial, sans-serif; font-weight: 700; fill: #000; stroke: #000; }
.lg-big { font-size: 33px; stroke-width: 1.400px; }
.lg-small { font-size: 20px; stroke-width: 0.800px; }
.lg-pink { fill: #ec008c; stroke: #ec008c; }
.vscroll { width: 15px; background: #fff; display: flex; flex-direction: column; align-items: stretch; flex: none; }
.sb-btn { height: 15px; margin-top: 1px; background: #f1f1f1; display: flex; align-items: center; justify-content: center; flex: none; }
.vthumb { width: 14px; height: 64px; margin-top: 218px; background: #c6c6c6; flex: none; }
.vthumb + .sb-btn { margin-top: auto; }

.navrow { height: 17px; padding-bottom: 1px; background: #fff; border-top: 1px solid #b5b5b5; display: flex; align-items: center; flex: none; }
.nav-ic { flex: none; }
.nav-add1 { margin-left: 3px; }
.nav-first { margin-left: 8px; }
.nav-prev { margin-left: 10px; }
.page-of { width: 66px; text-align: center; font-size: 11px; padding-right: 1px; flex: none; }
.nav-last { margin-left: 9px; }
.nav-add2 { margin-left: 6px; }
.page-tab { width: 54px; height: 16px; margin-left: 5px; padding-left: 12px; font-size: 10.500px; line-height: 13px; background: #fff; border-left: 1px solid #c5c5c5; border-bottom: 1px solid #c5c5c5; flex: none; }
.hdots { width: 2px; height: 10px; margin-left: 389px; border-left: 2px dotted #888; flex: none; }
.hscroll { flex: 1; display: flex; align-items: center; margin-left: 5px; height: 15px; }
.h-left { margin-left: 2px; flex: none; }
.hthumb { width: 247px; height: 15px; margin-left: 41px; background: #c6c6c6; flex: none; }
.h-right { margin-left: 283px; flex: none; }
.h-zoom { margin-left: 7px; flex: none; }

.palrow { height: 18px; background: #f2f2f2; border-bottom: 1px solid #dcdcdc; display: flex; align-items: center; flex: none; }
.dots { width: 2px; height: 10px; margin-left: 5px; border-left: 2px dotted #aaa; }
.pal-play { margin-left: 4px; }
.pal-drop { margin-left: 5px; }
.pal-back { margin-left: 1px; }
.swatches { display: flex; margin-left: 8px; border: 1px solid #555; }
.sw { width: 16px; height: 16px; display: block; flex: none; }
.sw-none { background: #fff; }
.c-red { background: #ed1c24; } .c-mag { background: #ec008c; } .c-wht { background: #fff; } .c-lgr { background: #e2e2e2; } .c-blk { background: #000; } .c-nbk { background: #1f1f1f; }
.pal-next { margin-left: auto; }
.pal-more { width: 20px; margin-right: 4px; text-align: right; font-size: 13px; line-height: 12px; color: #c4c4c4; flex: none; }

.dock { width: 18px; background: #f2f2f2; border-left: 1px solid #dfdfdf; display: flex; flex-direction: column; align-items: center; flex: none; }
.dock-dots { height: 10px; margin-top: 2px; line-height: 6px; color: #aaa; font-size: 10px; }
.dock-drop { margin-top: 2px; }
.dock-up { margin-top: 6px; }
.strip { margin-top: 4px; width: 17px; display: flex; flex-direction: column; flex: none; }
.ps { display: block; height: 16px; width: 17px; flex: none; }
.ps-none { background: #fff; border: 1px solid #555; }
.ps-none svg { width: 15px; height: 14px; }
.p1 { background: #1c1c1c; } .p2 { background: #3d3d3d; } .p3 { background: #575757; } .p4 { background: #686868; } .p5 { background: #7f7f7f; } .p6 { background: #909090; } .p7 { background: #a4a4a4; } .p8 { background: #b4b4b4; } .p9 { background: #c8c8c8; } .p10 { background: #e3e3e3; } .p11 { background: #fff; border-left: 1px solid #666; border-right: 1px solid #666; } .p12 { background: #2e3192; } .p13 { background: #00aeef; } .p14 { background: #00a651; } .p15 { background: #fff200; } .p16 { background: #ed1c24; } .p17 { background: #ec008c; } .p18 { background: #a3418f; } .p19 { background: #f7821f; } .p20 { background: #f9a1a1; } .p21 { background: #7d6a63; } .p22 { background: #c0bfe0; } .p23 { background: #9f9bc9; } .p24 { background: #6588c8; } .p25 { background: #7769b2; } .p26 { background: #837aa3; } .p27 { background: #4d6595; } .p28 { height: 7px; background: #4d4d75; }
.dock-down { margin-top: 4px; }
.dock-more { margin-top: 5px; font-size: 13px; line-height: 12px; color: #c4c4c4; }

.status { height: 31px; padding-bottom: 2px; background: #f3f3f3; display: flex; align-items: center; flex: none; padding-left: 5px; }
.coords { width: 83px; white-space: nowrap; font-size: 10.800px; }
.coord-btn { width: 14px; height: 14px; border: 1px solid #222; background: #f3f3f3; display: flex; align-items: center; justify-content: center; flex: none; }
.st-doc { margin-left: 752px; }
.st-fill { margin-left: 13px; }
.st-none { margin-left: 6px; flex: none; }
.st-none-label { margin-left: 3px; width: 151px; font-size: 11px; flex: none; }
.st-sep { display: block; width: 1px; height: 21px; background: #dcdcdc; flex: none; }
.st-pen { margin-left: 8px; }
.st-black { width: 15px; height: 16px; margin-left: 8px; background: #1f1f1f; flex: none; }
.st-outline { margin-left: 4px; font-size: 10.700px; white-space: nowrap; letter-spacing: -0.200px; color: #333; }

.taskbar { height: 37px; background: #1b1c1d; display: flex; align-items: center; flex: none; color: #fff; }
.start { margin-left: 15px; }
.search { width: 270px; height: 37px; margin-left: 15px; background: #f3f3f3; display: flex; align-items: center; flex: none; }
.search-ic { margin-left: 11px; }
.search-text { margin-left: 11px; font-size: 13px; width: 163px; color: #3c3c3c; white-space: nowrap; flex: none; }
.search-art { margin-left: -2px; }
.tb-task { margin-left: 14px; }
.tb-app { width: 44px; height: 37px; display: flex; align-items: center; justify-content: center; border-bottom: 2px solid #76b9ed; flex: none; }
.tb-explorer { margin-left: 21px; width: 38px; }
.tb-chrome { margin-left: 8px; width: 38px; }
.tb-corel { margin-left: 5px; background: #4a4a4a; }
.tb-record { margin-left: 5px; width: 38px; }
.weather { margin-left: 320px; }
.temp { margin-left: 9px; font-size: 12.500px; white-space: nowrap; flex: none; }
.cond { margin-left: 8px; font-size: 12.500px; white-space: nowrap; width: 76px; flex: none; }
.tray-chev { margin-left: 24px; }
.tray-batt { margin-left: 17px; }
.tray-meet { margin-left: 18px; }
.tray-wifi { margin-left: 18px; }
.tray-vol { margin-left: 12px; }
.clock { width: 72px; margin-left: 7px; display: flex; flex-direction: column; align-items: center; font-size: 10.800px; line-height: 16px; flex: none; }
.notif { margin-left: -2px; position: relative; flex: none; }
.badge { position: absolute; right: -4px; bottom: -6px; width: 15px; height: 15px; border-radius: 50%; background: #2b2b2b; border: 1px solid #999; font-size: 10px; line-height: 13px; text-align: center; font-weight: 600; }
.show-desktop { display: block; width: 1px; height: 37px; margin-left: auto; margin-right: 4px; background: #444; flex: none; }

.watermark { position: absolute; left: 1005px; top: 610px; display: flex; flex-direction: column; pointer-events: none; color: #c6c6c6; white-space: nowrap; }
.wm-1 { font-size: 18px; line-height: 22px; }
.wm-2 { font-size: 13.500px; line-height: 20px; }
```
